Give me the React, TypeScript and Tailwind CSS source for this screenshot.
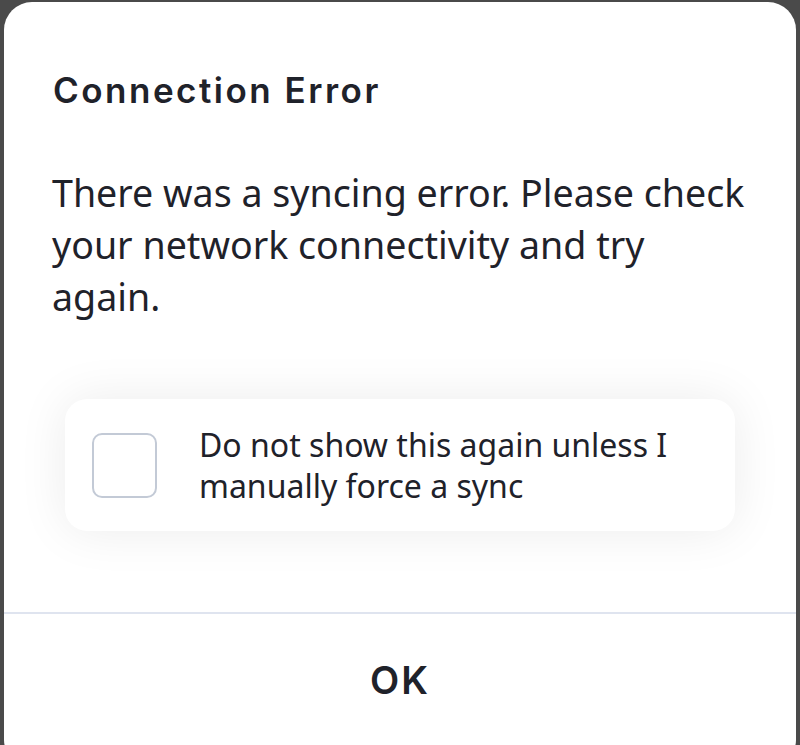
import React from 'react';

const App: React.FC = () => {
  return (
    <div className="h-[745px] w-[800px] overflow-hidden bg-[#4a4a4a] pt-[2px] px-[4px]">
      <div className="flex h-[760px] flex-col rounded-t-[28px] rounded-b-[22px] bg-white">
        <h1 className="px-[49px] pt-[66px] text-[35px] leading-[44px] font-semibold tracking-[2.5px] text-[#1f222a] [font-family:Inter,'Liberation_Sans',sans-serif]">
          Connection Error
        </h1>
        <p className="mt-[55px] pl-[48px] pr-[40px] text-[37.6px] leading-[52px] text-[#1f222a] [font-family:'Noto_Sans',sans-serif]">
          There was a syncing error. Please check your network connectivity and try again.
        </p>
        <div className="mx-[61px] mt-[76px] flex items-center gap-[42px] rounded-[22px] bg-white px-[27px] py-[25px] shadow-[0_0_50px_rgba(0,0,0,0.08)]">
          <span className="h-[65px] w-[65px] shrink-0 rounded-[10px] border-2 border-[#c3cad6] bg-white" />
          <span className="text-[32px] leading-[41px] text-[#1f222a] [font-family:'Noto_Sans',sans-serif]">
            Do not show this again unless I manually force a sync
          </span>
        </div>
        <div className="mt-[81px] h-[2px] bg-[#dfe4ef]" />
        <button className="h-[133px] text-center text-[38px] font-semibold tracking-[2px] text-[#1f222a] [font-family:Inter,'Liberation_Sans',sans-serif]">
          OK
        </button>
      </div>
    </div>
  );
};

export default App;
